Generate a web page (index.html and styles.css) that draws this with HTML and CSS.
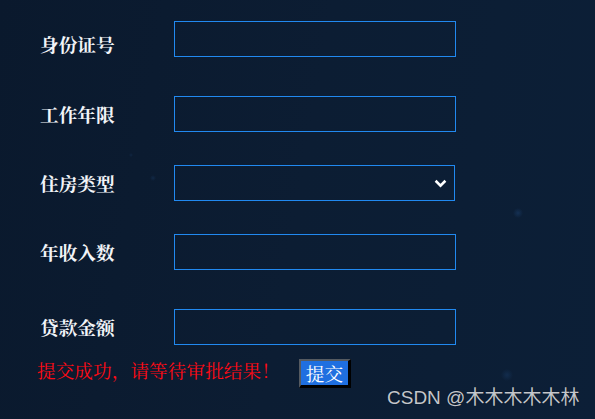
FILE: index.html
```html
<!DOCTYPE html>
<html lang="zh-CN">
<head>
<meta charset="utf-8">
<title>贷款申请</title>
<link rel="stylesheet" href="styles.css">
</head>
<body>
<div class="page">
  <form class="form">
    <div class="row row-first">
      <label class="label">身份证号</label>
      <input class="field" type="text">
    </div>
    <div class="row row-wide">
      <label class="label">工作年限</label>
      <input class="field" type="text">
    </div>
    <div class="row">
      <label class="label">住房类型</label>
      <div class="select">
        <svg class="chev" width="13" height="9" viewBox="0 0 13 9"><path d="M1.6 1.8 L6.5 6.6 L11.4 1.8" fill="none" stroke="#ffffff" stroke-width="2.6"/></svg>
      </div>
    </div>
    <div class="row">
      <label class="label">年收入数</label>
      <input class="field" type="text">
    </div>
    <div class="row row-wide">
      <label class="label">贷款金额</label>
      <input class="field" type="text">
    </div>
    <div class="result">
      <span class="msg">提交成功，请等待审批结果！</span>
      <button class="btn" type="button">提交</button>
    </div>
  </form>
  <div class="watermark">CSDN @木木木木木林</div>
</div>
</body>
</html>
```
FILE: styles.css
```css
html, body {
  margin: 0;
  padding: 0;
}
body {
  width: 595px;
  height: 419px;
  overflow: hidden;
  background-color: #0b1c31;
  background-image:
    radial-gradient(circle at 518px 213px, rgba(30,70,120,0.45) 0, rgba(30,70,120,0) 5px),
    radial-gradient(circle at 153px 178px, rgba(30,70,120,0.3) 0, rgba(30,70,120,0) 3px),
    radial-gradient(circle at 507px 375px, rgba(30,70,120,0.35) 0, rgba(30,70,120,0) 6px),
    radial-gradient(circle at 131px 155px, rgba(30,70,120,0.25) 0, rgba(30,70,120,0) 2px),
    linear-gradient(100deg, #0a192d 0%, #0c1d33 50%, #0c1f37 100%);
  font-family: "Noto Serif CJK SC", "Noto Sans CJK SC", serif;
}
.page {
  position: relative;
  width: 595px;
  height: 419px;
}
.form {
  display: flex;
  flex-direction: column;
  padding: 21px 0 0 40px;
  margin: 0;
}
.row {
  display: flex;
  align-items: center;
  height: 36px;
  margin-top: 33px;
}
.row-first {
  margin-top: 0;
  align-items: flex-end;
}
.row-first .label {
  margin-bottom: 2px;
}
.row-wide {
  margin-top: 39px;
}
.label {
  width: 134px;
  color: #f2f4f8;
  font-size: 18.7px;
  font-weight: bold;
  line-height: 22px;
}
.field {
  box-sizing: border-box;
  width: 282px;
  height: 36px;
  margin: 0;
  border: 1px solid #2189f0;
  background: transparent;
  outline: none;
  color: #fff;
}
.select {
  box-sizing: border-box;
  width: 281px;
  height: 36px;
  border: 1px solid #2189f0;
  display: flex;
  align-items: center;
  justify-content: flex-end;
  padding-right: 7px;
}
.chev {
  display: block;
}
.result {
  display: flex;
  align-items: center;
  margin-top: 14px;
  margin-left: -3px;
}
.msg {
  color: #ff0a14;
  font-family: "Noto Serif CJK SC", "Noto Sans CJK SC", serif;
  font-size: 18.7px;
  line-height: 22px;
  margin-top: -8px;
}
.btn {
  box-sizing: border-box;
  margin-left: 19px;
  width: 52px;
  height: 29px;
  padding: 0;
  background: #1f6fe0;
  color: #ffffff;
  font-family: "Noto Serif CJK SC", "Noto Sans CJK SC", serif;
  font-size: 18.7px;
  line-height: 22px;
  border-style: solid;
  border-width: 2px 3px 3px 2px;
  border-color: #555a60 #000 #000 #555a60;
}
.watermark {
  position: absolute;
  left: 387px;
  top: 386px;
  color: #c3c6cb;
  font-family: "Liberation Sans", Arial, "Noto Sans CJK SC", sans-serif;
  font-size: 19px;
  line-height: 24px;
  text-shadow: 0 0 1px rgba(0,0,0,0.6);
  white-space: nowrap;
}
```
